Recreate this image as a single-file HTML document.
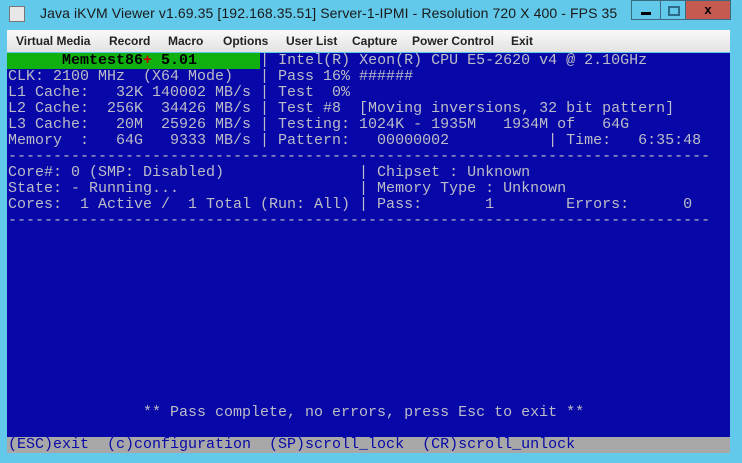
<!DOCTYPE html>
<html><head><style>
body{margin:0;width:742px;height:463px;background:#62c9ea;position:relative;overflow:hidden;font-family:"Liberation Sans",sans-serif}
.title{position:absolute;left:40px;top:5px;font-size:14px;color:#1a1a1a;letter-spacing:0.1px;white-space:nowrap}
.icon{position:absolute;left:9px;top:6px;width:14px;height:14px;background:#e8e8e8;border:1px solid #777}
.btn{position:absolute;top:0;height:20px;border:1px solid #3a6a80;box-sizing:border-box}
.menu{position:absolute;left:7px;top:30px;width:723px;height:22px;background:linear-gradient(#fafafa,#e2e2e2);font-size:12px;font-weight:bold;color:#222}
.menu span{position:absolute;top:4px}
.scr{position:absolute;left:7px;top:53px;width:723px;height:400px;background:#0808a8;overflow:hidden}
pre{margin:0;font-family:"Liberation Mono",monospace;font-size:15px;line-height:16px;color:#bcbcc8;position:absolute;left:1px;top:0}
.g{position:absolute;left:0;top:0;width:253px;height:16px;background:#10b010}
.bot{position:absolute;left:0;top:384px;width:723px;height:16px;background:#a8a8a8}
.bot pre{color:#0808a8;top:0}
</style></head><body>
<div class="icon"></div>
<div class="title">Java iKVM Viewer v1.69.35 [192.168.35.51] Server-1-IPMI - Resolution 720 X 400 - FPS 35</div>
<div class="btn" style="left:631px;width:30px;background:#62c9ea"><div style="position:absolute;left:9px;top:11px;width:10px;height:3px;background:#000"></div></div>
<div class="btn" style="left:660px;width:26px;background:#62c9ea"><div style="position:absolute;left:7px;top:5px;width:8px;height:6px;border:2px solid #2c6c88"></div></div>
<div class="btn" style="left:685px;width:46px;background:#c45a50;color:#000;font-weight:bold;font-size:13px;text-align:center;line-height:18px">x</div>
<div class="menu">
<span style="left:9px">Virtual Media</span><span style="left:102px">Record</span><span style="left:161px">Macro</span><span style="left:216px">Options</span><span style="left:279px">User List</span><span style="left:345px">Capture</span><span style="left:405px">Power Control</span><span style="left:504px">Exit</span>
</div>
<div class="scr">
<div class="g"></div>
<pre><span style="color:#000;font-weight:bold">      Memtest86<span style="color:#c00">+</span> 5.01       </span>| Intel(R) Xeon(R) CPU E5-2620 v4 @ 2.10GHz
CLK: 2100 MHz  (X64 Mode)   | Pass 16% ######
L1 Cache:   32K 140002 MB/s | Test  0%
L2 Cache:  256K  34426 MB/s | Test #8  [Moving inversions, 32 bit pattern]
L3 Cache:   20M  25926 MB/s | Testing: 1024K - 1935M   1934M of   64G
Memory  :   64G   9333 MB/s | Pattern:   00000002           | Time:   6:35:48
------------------------------------------------------------------------------
Core#: 0 (SMP: Disabled)               | Chipset : Unknown
State: - Running...                    | Memory Type : Unknown
Cores:  1 Active /  1 Total (Run: All) | Pass:       1        Errors:      0
------------------------------------------------------------------------------











               ** Pass complete, no errors, press Esc to exit **</pre>
<div class="bot"><pre>(ESC)exit  (c)configuration  (SP)scroll_lock  (CR)scroll_unlock</pre></div>
</div>
</body></html>
